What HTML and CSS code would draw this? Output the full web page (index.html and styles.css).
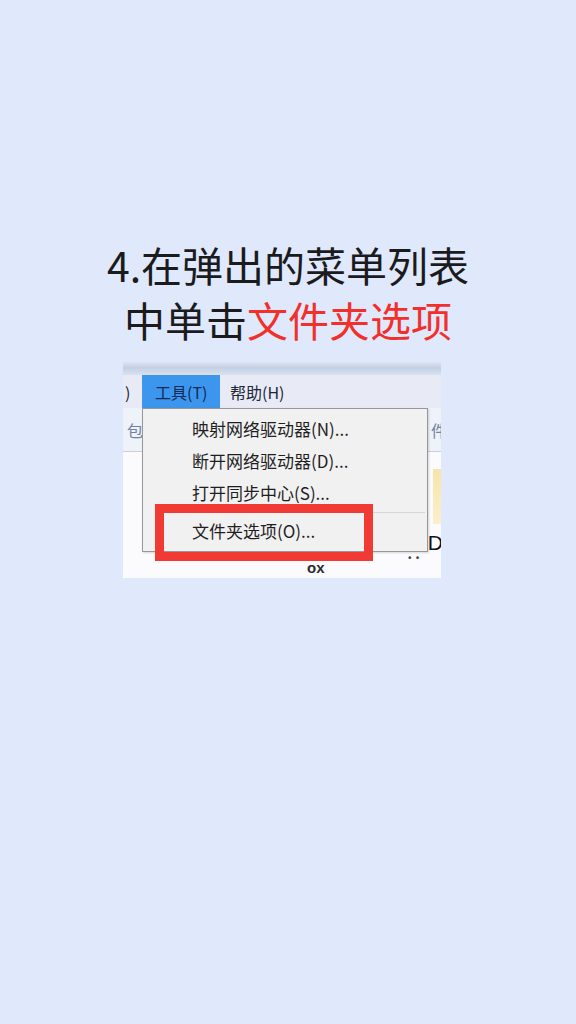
FILE: index.html
```html
<!DOCTYPE html>
<html lang="zh-CN">
<head>
    <meta charset="UTF-8">
    <meta name="viewport" content="width=device-width, initial-scale=1.0">
    <title>文件夹选项</title>
    <link rel="stylesheet" href="styles.css">
</head>
<body>
    <div class="title">
        <div class="line">4.在弹出的菜单列表</div>
        <div class="line">中单击<span class="hl">文件夹选项</span></div>
    </div>

    <div class="shot">
        <div class="titlebar"></div>
        <div class="menubar">
            <div class="m-item m-edge">)</div>
            <div class="m-item m-active">工具(T)</div>
            <div class="m-item">帮助(H)</div>
        </div>
        <div class="pane">
            <div class="toolbar">
                <span class="tb-left">包</span>
                <span class="tb-right">件</span>
            </div>
            <div class="files">
                <div class="folder"></div>
                <div class="file-row">
                    <span class="dots">. .</span>
                    <span class="letter">D</span>
                </div>
                <div class="caption">ox</div>
            </div>
        </div>

        <!-- dropdown of 工具 -->
        <div class="dropdown">
            <div class="dd-item">映射网络驱动器(N)...</div>
            <div class="dd-item">断开网络驱动器(D)...</div>
            <div class="dd-item">打开同步中心(S)...</div>
            <div class="dd-sep"></div>
            <div class="dd-item">文件夹选项(O)...</div>
        </div>
        <div class="mark"></div>
    </div>
</body>
</html>
```

FILE: styles.css
```css
body {
    margin: 0;
    background-color: #e0e8fb;
    font-family: "Noto Sans CJK SC", "Noto Sans", sans-serif;
}
.title {
    padding-top: 237px;
    text-align: center;
    font-size: 41px;
    line-height: 55px;
    color: #1b1b1d;
}
.hl {
    color: #f2302b;
}
.shot {
    position: relative;
    width: 318px;
    margin: 15px 0 0 123px;
    background-color: #fbfbfd;
    overflow: hidden;
}
.titlebar {
    height: 13px;
    background: linear-gradient(#dde4f0, #c3d0e4 45%, #d9e2f0);
}
.menubar {
    display: flex;
    height: 33px;
    background-color: #e8ebf6;
    font-size: 16px;
    color: #1d2738;
}
.m-item {
    display: flex;
    align-items: center;
    padding-left: 10px;
}
.m-edge {
    width: 17px;
    padding-left: 2px;
}
.m-active {
    width: 65px;
    padding-left: 13px;
    background-color: #3c96ee;
    color: #0f2a55;
}
.pane {
    height: 170px;
}
.toolbar {
    display: flex;
    justify-content: space-between;
    align-items: center;
    height: 43px;
    border-bottom: 1px solid #c8d0dd;
    background-color: #eef2f9;
    font-size: 16px;
    color: #6f83a0;
}
.tb-left {
    margin-left: 4px;
}
.tb-right {
    margin-right: -6px;
}
.files {
    display: flex;
    flex-direction: column;
    align-items: flex-end;
    height: 126px;
}
.folder {
    width: 8px;
    height: 55px;
    margin-top: 17px;
    background: linear-gradient(#f8e4a8, #fcefcb);
}
.file-row {
    display: flex;
    align-items: flex-start;
    gap: 8px;
    margin-top: 8px;
    height: 26px;
}
.dots {
    font-size: 14px;
    font-weight: bold;
    line-height: 14px;
    color: #444;
    margin-top: 14px;
}
.letter {
    font-family: "Liberation Sans", sans-serif;
    font-size: 21px;
    line-height: 22px;
    color: #111;
    margin-right: -2px;
}
.caption {
    align-self: flex-start;
    margin-left: 184px;
    margin-top: 1px;
    font-family: "Liberation Sans", sans-serif;
    font-size: 15px;
    font-weight: bold;
    color: #2a2a2a;
    line-height: 18px;
}
.dropdown {
    position: absolute;
    left: 19px;
    top: 46px;
    width: 284px;
    padding: 4px 0 4px;
    border: 1px solid #979797;
    background-color: #f1f1f2;
    box-shadow: 1px 1px 2px rgba(0, 0, 0, 0.15);
    font-size: 17px;
    color: #1f1f1f;
}
.dd-item {
    height: 32px;
    line-height: 32px;
    padding-left: 49px;
}
.dd-sep {
    height: 1px;
    margin: 3px 2px 2px 28px;
    background-color: #d7d7d7;
}
.mark {
    position: absolute;
    left: 32px;
    top: 142px;
    width: 200px;
    height: 39px;
    border: 9px solid #f23a34;
}
```
